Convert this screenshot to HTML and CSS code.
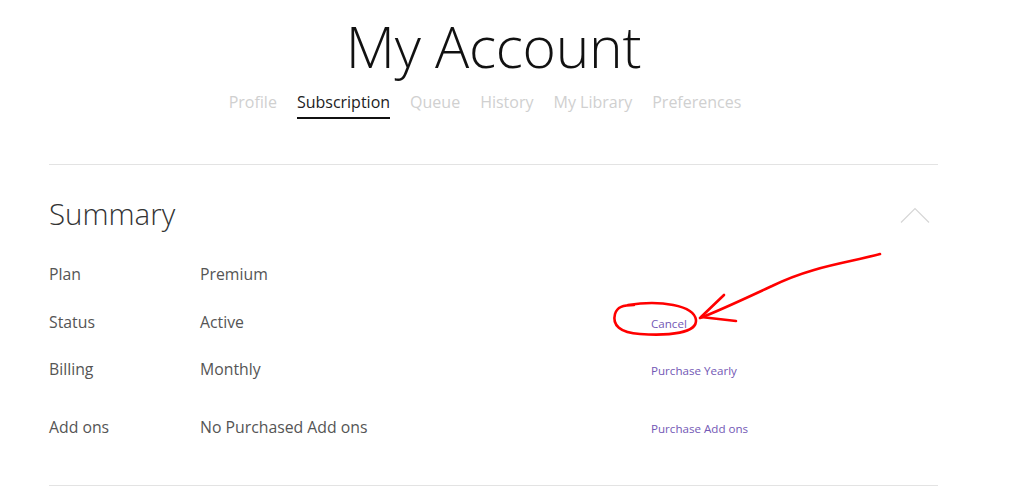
FILE: index.html
```html
<!DOCTYPE html>
<html lang="en">
<head>
<meta charset="utf-8">
<title>My Account</title>
<link rel="stylesheet" href="styles.css">
</head>
<body>
<div class="page">
  <header class="header">
    <h1 class="title">My Account</h1>
    <nav class="tabs">
      <a class="tab">Profile</a>
      <a class="tab active">Subscription</a>
      <a class="tab">Queue</a>
      <a class="tab">History</a>
      <a class="tab">My Library</a>
      <a class="tab">Preferences</a>
    </nav>
  </header>
  <hr class="rule">
  <section class="summary">
    <div class="summary-head">
      <h2 class="summary-title">Summary</h2>
      <svg class="chevron" width="30" height="16" viewBox="0 0 30 16"><path d="M1 15.5 L15 1.5 L29 15.5" fill="none" stroke="#d6d6d6" stroke-width="1.2"/></svg>
    </div>
    <div class="row r1"><span class="label">Plan</span><span class="value">Premium</span><span></span></div>
    <div class="row r2"><span class="label">Status</span><span class="value">Active</span><a class="link">Cancel</a></div>
    <div class="row r3"><span class="label">Billing</span><span class="value">Monthly</span><a class="link">Purchase Yearly</a></div>
    <div class="row r4"><span class="label">Add ons</span><span class="value">No Purchased Add ons</span><a class="link">Purchase Add ons</a></div>
  </section>
  <hr class="rule">
</div>
<svg class="annotation" width="1024" height="488" viewBox="0 0 1024 488">
  <g fill="none" stroke="#ff0000" stroke-width="2.6" stroke-linecap="round" stroke-linejoin="round">
    <path d="M628 305 C660 300 694 305 696 320 C697 333 670 336 640 334 C620 333 612 325 615 314 C617 307 623 305 634 305"/>
    <path d="M880 254 C852 262 812 266 772 286 C742 300 716 312 700 318"/>
    <path d="M724 295 L701 317 L736 321"/>
  </g>
</svg>
</body>
</html>
```
FILE: styles.css
```css
html, body {
  margin: 0;
  padding: 0;
  background: #fff;
}
body {
  font-family: "Open Sans", "Liberation Sans", sans-serif;
  color: #444;
  width: 1024px;
  height: 488px;
  overflow: hidden;
  position: relative;
}
.page {
  width: 889px;
  margin-left: 49px;
}
.header {
  display: flex;
  flex-direction: column;
  align-items: center;
}
.title {
  margin: 16px 0 0;
  font-size: 57px;
  font-weight: 300;
  line-height: 60px;
  color: #111;
  letter-spacing: -0.3px;
}
.tabs {
  display: flex;
  gap: 20px;
  margin-top: 14px;
  margin-right: 17px;
}
.tab {
  font-size: 16px;
  font-weight: 400;
  line-height: 24px;
  color: #d0d0d0;
  padding-bottom: 3px;
  border-bottom: 2px solid transparent;
}
.tab.active {
  color: #222;
  border-bottom-color: #111;
}
.rule {
  margin: 0;
  border: 0;
  border-top: 1px solid #e3e3e3;
}
.header + .rule {
  margin-top: 45px;
}
.summary {
  padding-top: 29px;
  padding-bottom: 46px;
}
.summary-head {
  display: flex;
  justify-content: space-between;
  align-items: flex-start;
  height: 40px;
  margin-bottom: 28px;
}
.summary-title {
  margin: 0;
  font-size: 29.5px;
  font-weight: 300;
  line-height: 40px;
  color: #333;
}
.chevron {
  margin-top: 13px;
  margin-right: 8px;
}
.row {
  display: grid;
  grid-template-columns: 151px 451px 1fr;
  align-items: baseline;
  font-size: 15.8px;
  line-height: 24px;
}
.r1 { height: 48px; }
.r2 { height: 47px; }
.r3 { height: 58px; }
.r4 { height: 24px; }
.label {
  color: #555;
}
.value {
  color: #555;
}
.link {
  font-size: 11.6px;
  color: #7358b5;
}
.annotation {
  position: absolute;
  top: 0;
  left: 0;
  pointer-events: none;
}
```
